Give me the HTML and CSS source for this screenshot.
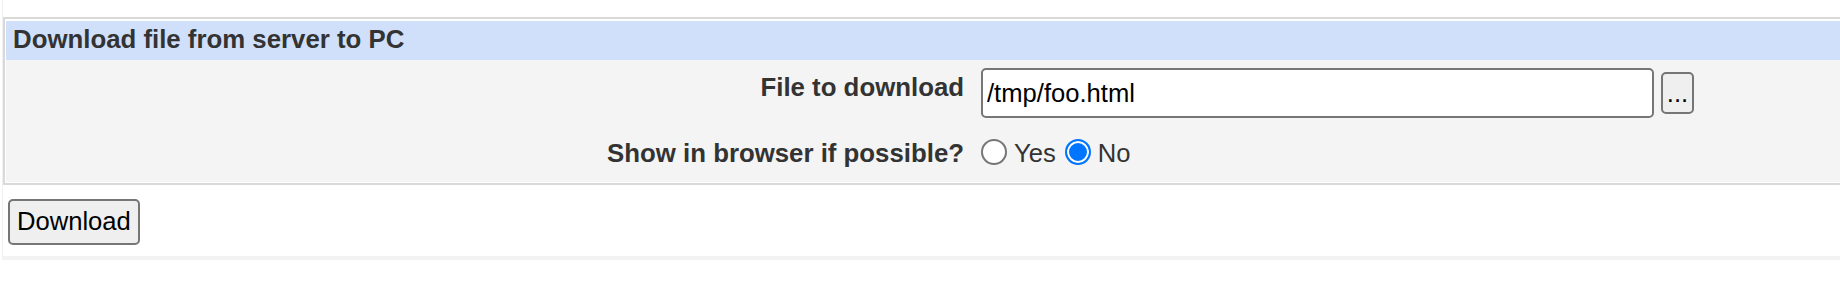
FILE: index.html
```html
<!DOCTYPE html>
<html>
<head>
<meta charset="utf-8">
<title>Download file from server to PC</title>
<link rel="stylesheet" href="styles.css">
</head>
<body>
<div class="page">
  <div class="panel">
    <div class="panel-head">Download file from server to PC</div>
    <div class="panel-body">
      <label class="label label-file" for="file">File to download</label>
      <div class="field field-file">
        <input class="text-input" id="file" type="text" value="/tmp/foo.html">
        <button class="browse" type="button">...</button>
      </div>
      <span class="label label-radio">Show in browser if possible?</span>
      <div class="field radios">
        <label class="radio"><input class="radio-input" type="radio" name="show" value="1"><span>Yes</span></label>
        <label class="radio"><input class="radio-input" type="radio" name="show" value="0" checked><span>No</span></label>
      </div>
    </div>
  </div>
  <div class="actions">
    <button class="btn" type="button">Download</button>
  </div>
</div>
</body>
</html>
```
FILE: styles.css
```css
html, body {
  margin: 0;
  padding: 0;
  background: #ffffff;
  overflow: hidden;
}

body {
  font-family: "Liberation Sans", Arial, sans-serif;
  font-size: 25.6px;
  color: #333333;
}

.page {
  width: 1950px;
  margin-left: 2px;
  padding: 17px 0 11px 0;
  border-left: 1px solid #f1f1f1;
  border-bottom: 4px solid #f3f3f3;
  background: #ffffff;
}

.panel {
  border: 2px solid #d9d9d9;
  padding: 2px 1px 1px 1px;
  background: #ffffff;
}

.panel-head {
  background: #d0e0fa;
  color: #333333;
  font-weight: bold;
  font-size: 25.8px;
  line-height: 30px;
  padding: 3px 7px 6px 7px;
}

.panel-body {
  background: #f4f4f4;
  display: grid;
  grid-template-columns: 958px 1fr;
  column-gap: 17px;
  row-gap: 20px;
  padding: 8px 0 14px 0;
}

.label {
  font-weight: bold;
  font-size: 25.8px;
  text-align: right;
  line-height: 30px;
  color: #333333;
}

.label-file {
  align-self: start;
  padding-top: 4px;
}

.field {
  display: flex;
  align-items: center;
}

.field-file {
  gap: 7px;
}

.text-input {
  box-sizing: border-box;
  width: 673px;
  height: 50px;
  margin: 0;
  padding: 0 4px;
  border: 2px solid #767676;
  border-radius: 5px;
  background: #ffffff;
  font-family: "Liberation Sans", Arial, sans-serif;
  font-size: 25.6px;
  color: #000000;
  outline: none;
}

.browse {
  box-sizing: border-box;
  width: 33px;
  height: 42px;
  margin: 0;
  padding: 0;
  border: 2px solid #767676;
  border-radius: 5px;
  background: #efefef;
  font-family: "Liberation Sans", Arial, sans-serif;
  font-size: 25.6px;
  line-height: 30px;
  color: #000000;
}

.radios {
  line-height: 30px;
  gap: 9px;
}

.radio {
  display: inline-flex;
  align-items: center;
  gap: 7px;
  color: #333333;
}

.radio-input {
  appearance: none;
  -webkit-appearance: none;
  box-sizing: border-box;
  width: 26px;
  height: 26px;
  margin: 0 0 3px 0;
  border: 2px solid #767676;
  border-radius: 50%;
  background: #ffffff;
}

.radio-input:checked {
  border-color: #0075ff;
  background: #0075ff;
  box-shadow: inset 0 0 0 2px #ffffff;
}

.actions {
  padding: 14px 0 0 5px;
}

.btn {
  box-sizing: border-box;
  margin: 0;
  padding: 5px 7px 7px 7px;
  border: 2px solid #767676;
  border-radius: 5px;
  background: #efefef;
  font-family: "Liberation Sans", Arial, sans-serif;
  font-size: 25.6px;
  line-height: 30px;
  color: #000000;
}
```
